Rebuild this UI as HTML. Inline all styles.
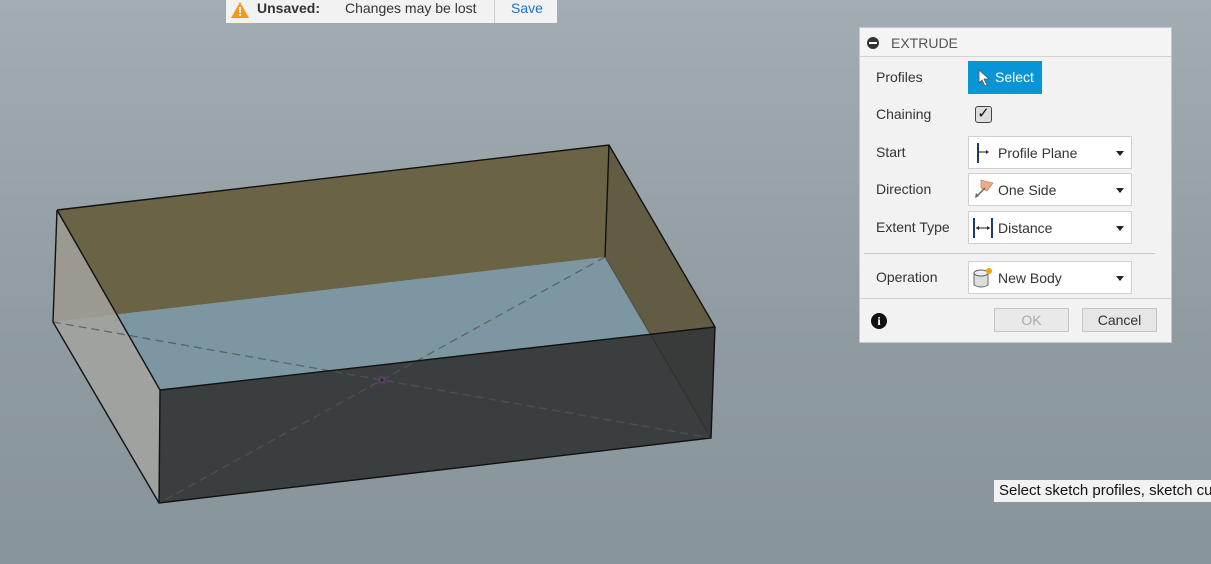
<!DOCTYPE html>
<html><head><meta charset="utf-8"><style>
*{margin:0;padding:0;box-sizing:border-box}
body{width:1211px;height:564px;overflow:hidden;position:relative;font-family:"Liberation Sans",sans-serif;background:linear-gradient(#a2adb3,#8f9ba1 60%,#87949a)}
.bar{position:absolute;left:226px;top:0;width:331px;height:23px;background:#f2f2f2;font-size:14px;color:#333}
.bar span{position:absolute;top:0px}
.panel{position:absolute;left:859px;top:27px;width:313px;height:316px;background:#f2f2f2;border:1px solid #c8c8c8;font-size:14px;color:#333}
.hdr{height:30px;border-bottom:1px solid #d4d4d4;background:#f4f4f4}
.lbl{position:absolute;left:16px}
.dd{position:absolute;left:108px;width:164px;height:33px;background:#fff;border:1px solid #d0d0d0}
.dd span{position:absolute;left:29px;top:8px}
.dd i{position:absolute;right:7px;top:14px;border-left:4px solid transparent;border-right:4px solid transparent;border-top:5px solid #222}
.btn{position:absolute;top:280px;height:24px;border:1px solid #c4c4c4;background:#e6e6e6;text-align:center;line-height:22px}
</style></head><body>
<svg width="1211" height="564" style="position:absolute;left:0;top:0">
<polygon points="57,210 609,145 605,257 53,322" fill="#6a6345"/>
<polygon points="609,145 715,327 711,438 605,257" fill="#625c42"/>
<polygon points="53,322 605,257 711,438 159,503" fill="#7d97a2"/>
<polygon points="57,210 160,390 159,503 53,322" fill="#a5a39e" fill-opacity="0.85"/>
<polygon points="160,390 715,327 711,438 159,503" fill="#37393a" fill-opacity="0.95"/>
<g stroke="#555" stroke-width="1.3" stroke-dasharray="8,5" fill="none"><line x1="53" y1="322" x2="711" y2="438" opacity="0.8"/><line x1="605" y1="257" x2="159" y2="503" opacity="0.8"/></g>
<line x1="605" y1="257" x2="711" y2="438" stroke="#222" stroke-opacity="0.5"/>
<g stroke="#111" stroke-width="1.4" fill="none"><polyline points="57,210 609,145 715,327 711,438 159,503 53,322 57,210"/><line x1="57" y1="210" x2="160" y2="390"/><line x1="160" y1="390" x2="715" y2="327"/><line x1="160" y1="390" x2="159" y2="503"/><line x1="609" y1="145" x2="605" y2="257"/></g>
<circle cx="382" cy="380" r="4.5" fill="#5a4a66" fill-opacity="0.5" stroke="#553366" stroke-width="1"/><circle cx="382" cy="380" r="1.2" fill="#222"/>
</svg>
<div class="bar">
<svg width="20" height="18" style="position:absolute;left:4px;top:1px"><polygon points="10,1 19,17 1,17" fill="#f39a1e"/><rect x="9" y="6" width="2" height="6" fill="#fff"/><rect x="9" y="13" width="2" height="2" fill="#fff"/></svg>
<span style="left:31px;font-weight:bold">Unsaved:</span>
<span style="left:119px">Changes may be lost</span>
<div style="position:absolute;left:268px;top:0;width:1px;height:23px;background:#ccc"></div>
<span style="left:285px;color:#1a73c6">Save</span>
</div>
<div class="panel">
<div class="hdr" style="height:29px"><div style="position:absolute;left:7px;top:9px;width:12px;height:12px;border-radius:50%;background:#333"><div style="margin:5px 2px 0;height:2px;background:#fff"></div></div><span style="position:absolute;left:31px;top:7px;color:#555">EXTRUDE</span></div>
<span class="lbl" style="top:41px">Profiles</span>
<div style="position:absolute;left:108px;top:33px;width:74px;height:33px;background:#0696d7;color:#fff"><svg width="14" height="18" style="position:absolute;left:10px;top:8px"><path d="M1,1 L1,14 L4,11 L7,17 L9,16 L6,10 L11,10 Z" fill="#fff" stroke="#555" stroke-width="0.8"/></svg><span style="position:absolute;left:27px;top:8px">Select</span></div>
<span class="lbl" style="top:78px">Chaining</span>
<div style="position:absolute;left:115px;top:78px;width:17px;height:17px;border:1.5px solid #444;border-radius:3px;background:#ddd;font-size:15px;line-height:14px;text-align:center;color:#111">✓</div>
<span class="lbl" style="top:116px">Start</span>
<div class="dd" style="top:108px"><svg width="20" height="24" style="position:absolute;left:6px;top:4px"><rect x="2" y="2" width="2" height="20" fill="#1d3a6e"/><line x1="4" y1="11" x2="12" y2="11" stroke="#222"/><path d="M11,9 L14,11 L11,13Z" fill="#222"/></svg><span>Profile Plane</span><i></i></div>
<span class="lbl" style="top:153px">Direction</span>
<div class="dd" style="top:145px"><svg width="22" height="24" style="position:absolute;left:4px;top:4px"><polygon points="8,2 20,5 14,13 8,10" fill="#eea987" stroke="#c07050" stroke-width="0.6"/><line x1="12" y1="10" x2="3" y2="19" stroke="#666" stroke-width="1.5"/><path d="M2,20 L3,15 L6,18Z" fill="#666"/></svg><span>One Side</span><i></i></div>
<span class="lbl" style="top:191px">Extent Type</span>
<div class="dd" style="top:183px"><svg width="22" height="24" style="position:absolute;left:3px;top:4px"><rect x="1" y="2" width="2" height="20" fill="#1d3a6e"/><rect x="19" y="2" width="2" height="20" fill="#1d3a6e"/><line x1="4" y1="12" x2="18" y2="12" stroke="#222"/><path d="M4,12 L7,10 L7,14Z M18,12 L15,10 L15,14Z" fill="#222"/></svg><span>Distance</span><i></i></div>
<div style="position:absolute;left:4px;top:225px;width:291px;height:1px;background:#c8c8c8"></div>
<span class="lbl" style="top:241px">Operation</span>
<div class="dd" style="top:233px"><svg width="22" height="24" style="position:absolute;left:3px;top:4px"><path d="M2,7 L2,19 Q9,23 16,19 L16,7" fill="#ddd" stroke="#666"/><ellipse cx="9" cy="7" rx="7" ry="3" fill="#eee" stroke="#666"/><circle cx="17" cy="5" r="3" fill="#f6a800"/></svg><span>New Body</span><i></i></div>
<div style="position:absolute;left:0;top:270px;width:311px;height:1px;background:#d4d4d4"></div>
<div style="position:absolute;left:11px;top:285px;width:16px;height:16px;border-radius:50%;background:#111;color:#fff;font-size:12px;font-weight:bold;text-align:center;line-height:16px;font-family:'Liberation Serif',serif">i</div>
<div class="btn" style="left:134px;width:75px;color:#aaa;background:#e9e9e9">OK</div>
<div class="btn" style="left:222px;width:75px;color:#333">Cancel</div>
</div>
<div style="position:absolute;left:994px;top:480px;width:230px;height:22px;background:#f2f2f2;font-size:15px;color:#111;padding:2px 0 0 5px;white-space:nowrap">Select sketch profiles, sketch curves</div>
</body></html>
